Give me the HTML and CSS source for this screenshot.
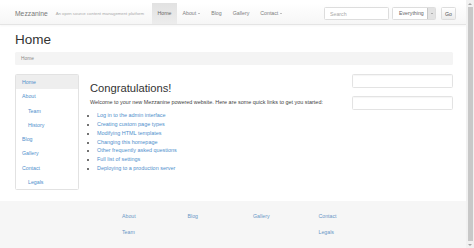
FILE: index.html
```html
<!DOCTYPE html>
<html lang="en">
<head>
    <meta charset="UTF-8">
    <meta name="viewport" content="width=device-width, initial-scale=1.0">
    <title>Home | Mezzanine</title>
    <link rel="stylesheet" href="styles.css">
</head>
<body>
    <div class="page">
        <div class="navbar">
            <a class="brand" href="#">Mezzanine</a>
            <span class="tagline">An open source content management platform</span>
            <ul class="nav">
                <li class="active"><a href="#">Home</a></li>
                <li><a href="#">About <span class="caret"></span></a></li>
                <li><a href="#">Blog</a></li>
                <li><a href="#">Gallery</a></li>
                <li><a href="#">Contact <span class="caret"></span></a></li>
            </ul>
            <form class="search">
                <input class="search-input" type="text" placeholder="Search">
                <div class="select">
                    <span class="select-text">Everything</span>
                    <span class="select-arrow"><span class="caret"></span></span>
                </div>
                <button type="button" class="btn">Go</button>
            </form>
        </div>

        <div class="container">
            <h1>Home</h1>
            <div class="breadcrumb">Home</div>

            <div class="columns">
                <ul class="side-nav">
                    <li class="active"><a href="#">Home</a></li>
                    <li><a href="#">About</a></li>
                    <li class="sub"><a href="#">Team</a></li>
                    <li class="sub"><a href="#">History</a></li>
                    <li><a href="#">Blog</a></li>
                    <li><a href="#">Gallery</a></li>
                    <li><a href="#">Contact</a></li>
                    <li class="sub"><a href="#">Legals</a></li>
                </ul>

                <div class="main">
                    <h2>Congratulations!</h2>
                    <p>Welcome to your new Mezzanine powered website. Here are some quick links to get you started:</p>
                    <ul class="links">
                        <li><a href="#">Log in to the admin interface</a></li>
                        <li><a href="#">Creating custom page types</a></li>
                        <li><a href="#">Modifying HTML templates</a></li>
                        <li><a href="#">Changing this homepage</a></li>
                        <li><a href="#">Other frequently asked questions</a></li>
                        <li><a href="#">Full list of settings</a></li>
                        <li><a href="#">Deploying to a production server</a></li>
                    </ul>
                </div>

                <div class="right">
                    <div class="panel-input"></div>
                    <div class="panel-input"></div>
                </div>
            </div>
        </div>

        <div class="footer">
            <div class="footer-grid">
                <a href="#">About</a>
                <a href="#">Blog</a>
                <a href="#">Gallery</a>
                <a href="#">Contact</a>
                <a href="#">Team</a>
                <span></span>
                <span></span>
                <a href="#">Legals</a>
            </div>
        </div>
    </div>

    <div class="scrollbar">
        <span class="arrow up"></span>
        <span class="thumb"></span>
        <span class="arrow down"></span>
    </div>
</body>
</html>
```

FILE: styles.css
```css
html, body {
    margin: 0;
    height: 248px;
    overflow: hidden;
}
body {
    display: flex;
    font-family: "Liberation Sans", Arial, sans-serif;
    font-size: 5.24px;
    line-height: 7.5px;
    color: #444;
    background: #fff;
}
a {
    color: #4f8fcc;
    text-decoration: none;
}
ul {
    margin: 0;
    padding: 0;
    list-style: none;
}

.page {
    flex: 1;
    display: flex;
    flex-direction: column;
    min-width: 0;
}

/* top navbar */
.navbar {
    display: flex;
    align-items: center;
    height: 21px;
    margin-top: 3px;
    padding: 0 10px 0 15px;
    background: linear-gradient(#fff, #f6f6f6);
    border-bottom: 1px solid #e4e4e4;
    box-shadow: 0 1px 2px rgba(0, 0, 0, 0.04);
}
.brand {
    font-size: 6.75px;
    color: #777;
}
.tagline {
    margin-left: 8px;
    font-size: 4.3px;
    color: #aaa;
}
.nav {
    display: flex;
    align-self: stretch;
    margin-left: 8px;
}
.nav li a {
    display: flex;
    align-items: center;
    height: 100%;
    padding: 0 5.5px;
    color: #808080;
}
.nav li.active a {
    background: linear-gradient(#e2e2e2, #ececec);
    color: #666;
}
.caret {
    display: inline-block;
    margin-left: 2px;
    border-top: 1.6px solid #888;
    border-left: 1.6px solid transparent;
    border-right: 1.6px solid transparent;
    vertical-align: middle;
}
.search {
    display: flex;
    align-items: center;
    margin: 0 0 0 auto;
}
.search-input {
    box-sizing: border-box;
    width: 65px;
    height: 13px;
    padding: 0 5px;
    border: 1px solid #ddd;
    border-radius: 1.5px;
    font-family: inherit;
    font-size: 5.24px;
    color: #555;
    outline: none;
}
.search-input::placeholder {
    color: #aaa;
}
.select {
    display: flex;
    align-items: center;
    box-sizing: border-box;
    width: 44px;
    height: 13px;
    margin-left: 3px;
    padding-left: 6px;
    border: 1px solid #ddd;
    border-radius: 1.5px;
    background: #fff;
    color: #666;
}
.select-text {
    flex: 1;
}
.select-arrow {
    display: flex;
    align-items: center;
    justify-content: center;
    width: 7px;
    height: 11px;
    background: #e3e3e3;
    border-left: 1px solid #c8c8c8;
}
.select-arrow .caret {
    margin: 0;
    border-top-color: #777;
}
.btn {
    box-sizing: border-box;
    width: 15px;
    height: 13px;
    margin-left: 5px;
    padding: 0;
    border: 1px solid #ddd;
    border-radius: 1.5px;
    background: linear-gradient(#fff, #ececec);
    font-family: inherit;
    font-size: 5.24px;
    color: #555;
}

/* page body */
.container {
    width: 438px;
    margin-left: 15px;
}
h1 {
    margin: 6.5px 0 0;
    font-size: 13.5px;
    line-height: 15px;
    font-weight: normal;
    color: #333;
}
.breadcrumb {
    height: 13px;
    margin-top: 5.5px;
    padding-left: 6px;
    border-radius: 1.5px;
    background: #f4f4f4;
    font-size: 4.8px;
    line-height: 13px;
    color: #888;
}
.columns {
    display: grid;
    grid-template-columns: 64px 251px 101px;
    column-gap: 11px;
    margin-top: 9px;
}
.side-nav {
    align-self: start;
    border: 1px solid #e2e2e2;
    border-radius: 1.5px;
}
.side-nav li a {
    display: block;
    height: 14.3px;
    padding-left: 6px;
    line-height: 14.3px;
}
.side-nav li.sub a {
    padding-left: 12px;
}
.side-nav li.active a {
    background: #eee;
}

.main {
    font-size: 5.45px;
}
.main h2 {
    margin: 8px 0 0;
    font-size: 11.2px;
    line-height: 12.3px;
    font-weight: normal;
    color: #333;
}
.main p {
    margin: 5px 0 0;
}
.links {
    margin-top: 4.6px;
    padding-left: 7px;
    list-style: disc;
}
.links li {
    line-height: 8.7px;
}
.links li::marker {
    color: #444;
}

.right {
    display: flex;
    flex-direction: column;
    gap: 8px;
}
.panel-input {
    height: 12px;
    border: 1px solid #e3e3e3;
    border-radius: 1.5px;
    box-shadow: inset 0 1px 1px rgba(0, 0, 0, 0.04);
}

/* footer */
.footer {
    flex: 1;
    margin-top: 11px;
    background: #f6f6f6;
}
.footer-grid {
    display: grid;
    grid-template-columns: repeat(4, 65.5px);
    row-gap: 9px;
    padding: 11.5px 0 0 122px;
}
.footer-grid a {
    color: #6a96c6;
}

/* drawn window scrollbar */
.scrollbar {
    display: flex;
    flex-direction: column;
    align-items: center;
    width: 8px;
    background: #f1f1f1;
}
.arrow {
    width: 0;
    height: 0;
    margin: 2.5px 0;
    border-left: 2px solid transparent;
    border-right: 2px solid transparent;
}
.arrow.up {
    border-bottom: 2px solid #a3a3a3;
}
.arrow.down {
    border-top: 2px solid #a3a3a3;
}
.thumb {
    flex: 1;
    width: 5px;
    background: #c8c8c8;
}
```
